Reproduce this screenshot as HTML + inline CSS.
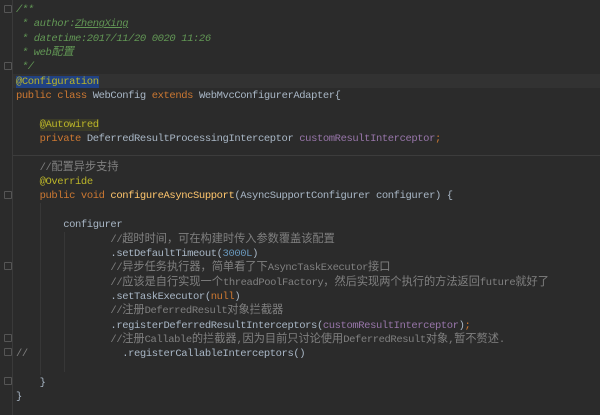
<!DOCTYPE html>
<html><head><meta charset="utf-8"><style>
html,body{margin:0;padding:0;background:#2b2b2b;width:600px;height:415px;overflow:hidden}
#g{position:absolute;left:0;top:0;width:12px;height:415px;background:#2b2b2b;border-right:1px solid #3a3a3a}
pre{position:absolute;left:16px;top:3px;margin:0;font-family:"Liberation Mono","Noto Sans CJK SC",monospace;font-size:10.5px;letter-spacing:-0.4px;line-height:14.35px;color:#a9b7c6;white-space:pre}
.z{font-size:11.2px;letter-spacing:0;line-height:10px}
.c{color:#808080}.d{color:#629755;font-style:italic}.k{color:#cc7832}.a{color:#bbb529}.m{color:#ffc66d}.f{color:#9876aa}.n{color:#6897bb}
.u{text-decoration:underline}
.hl{position:absolute;left:13px;width:587px;top:74px;height:14px;background:#323232}
.sel{background:#214283}
.ab{background:#3b3b28}
.sep{position:absolute;left:13px;right:0;top:155px;height:1px;background:#3c3c3c}
.ig{position:absolute;width:1px;background:#373737}
.fm{position:absolute;left:4px;width:6px;height:6px;border:1px solid #555;border-radius:1px}
</style></head><body>
<div id="g"></div>
<div class="hl"></div>
<div class="sep"></div>
<div class="ig" style="left:40px;top:203px;height:172px"></div>
<div class="ig" style="left:64px;top:232px;height:140px"></div>
<div class="fm" style="top:5px"></div>
<div class="fm" style="top:62px"></div>
<div class="fm" style="top:191px"></div>
<div class="fm" style="top:262px"></div>
<div class="fm" style="top:334px"></div>
<div class="fm" style="top:348px"></div>
<div class="fm" style="top:377px"></div>
<pre><span class="d">/**</span>
<span class="d"> * author:<span class="u">ZhengXing</span></span>
<span class="d"> * datetime:2017/11/20 0020 11:26</span>
<span class="d"> * web<span class="z">配置</span></span>
<span class="d"> */</span>
<span class="a sel">@Configuration</span>
<span class="k">public class </span>WebConfig <span class="k">extends </span>WebMvcConfigurerAdapter{

    <span class="a ab">@Autowired</span>
    <span class="k">private </span>DeferredResultProcessingInterceptor <span class="f">customResultInterceptor</span><span class="k">;</span>

    <span class="c">//<span class="z">配置异步支持</span></span>
    <span class="a">@Override</span>
    <span class="k">public void </span><span class="m">configureAsyncSupport</span>(AsyncSupportConfigurer configurer) {

        configurer
                <span class="c">//<span class="z">超时时间，可在构建时传入参数覆盖该配置</span></span>
                .setDefaultTimeout(<span class="n">3000L</span>)
                <span class="c">//<span class="z">异步任务执行器，简单看了下</span>AsyncTaskExecutor<span class="z">接口</span></span>
                <span class="c">//<span class="z">应该是自行实现一个</span>threadPoolFactory<span class="z">，然后实现两个执行的方法返回</span>future<span class="z">就好了</span></span>
                .setTaskExecutor(<span class="k">null</span>)
                <span class="c">//<span class="z">注册</span>DeferredResult<span class="z">对象拦截器</span></span>
                .registerDeferredResultInterceptors(<span class="f">customResultInterceptor</span>)<span class="k">;</span>
                <span class="c">//<span class="z">注册</span>Callable<span class="z">的拦截器</span>,<span class="z">因为目前只讨论使用</span>DeferredResult<span class="z">对象</span>,<span class="z">暂不赘述</span>.</span>
<span class="c">//              </span>  .registerCallableInterceptors()

    }
}</pre>
</body></html>
